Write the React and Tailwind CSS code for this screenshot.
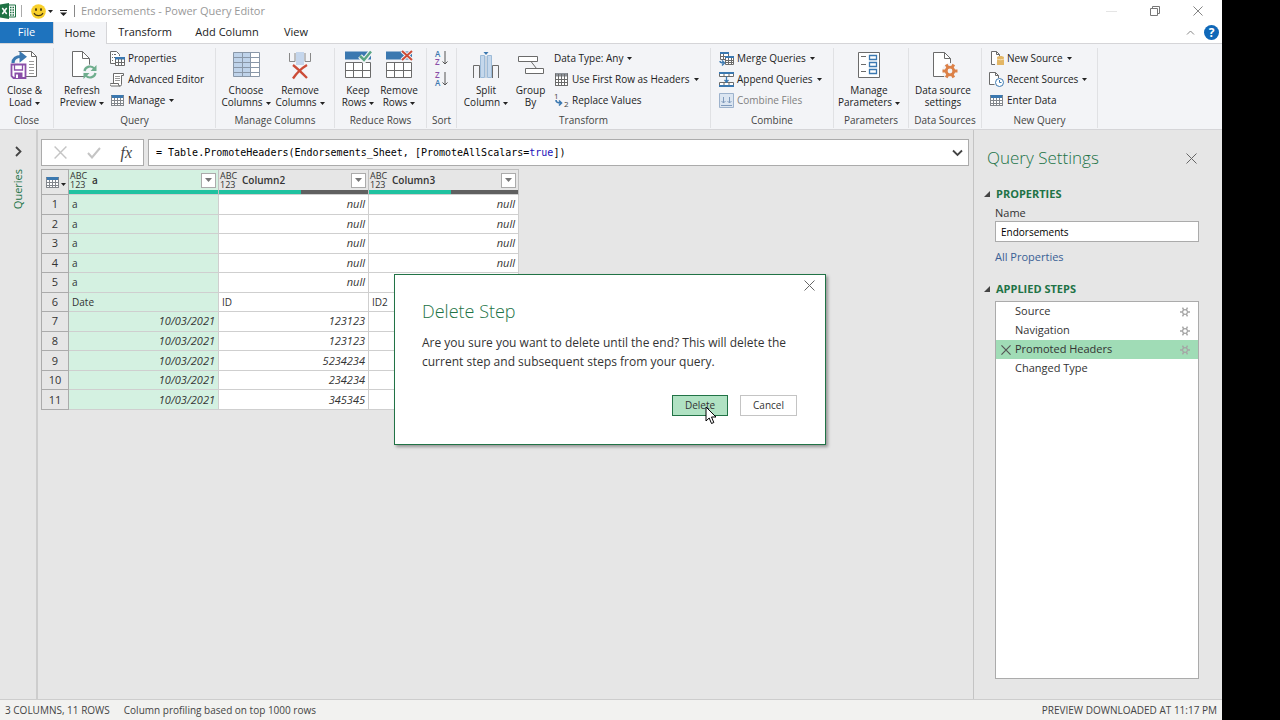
import React, { useState } from 'react';

const INK = '#6b6b6b';
const BLUE = '#3b78b0';

/* ---------- small glyphs ---------- */

function Caret({ className = 'ml-1' }) {
    return (
        <svg className={`inline-block shrink-0 align-middle ${className}`} width="5" height="3" viewBox="0 0 5 3" aria-hidden="true">
            <path d="M0 0h5L2.5 3z" fill="#222" />
        </svg>
    );
}

function Cross({ size = 11, color = '#666', width = 1 }) {
    return (
        <svg width={size} height={size} viewBox="0 0 11 11" fill="none" stroke={color} strokeWidth={width} aria-hidden="true">
            <path d="M.5.5l10 10M10.5.5l-10 10" />
        </svg>
    );
}

function Chevron({ d, color = '#444', width = 1.8 }) {
    return (
        <svg width="11" height="11" viewBox="0 0 11 11" fill="none" stroke={color} strokeWidth={width} aria-hidden="true">
            <path d={d} />
        </svg>
    );
}

function Gear({ color = '#a5a5a5' }) {
    return (
        <svg width="12" height="12" viewBox="0 0 12 12" fill="none" stroke={color} aria-hidden="true">
            <circle cx="6" cy="6" r="2.4" strokeWidth="1.2" />
            <path d="M8.5 6H11M3.5 6H1M7.3 8.2l1.2 2.1M4.7 3.8L3.5 1.7M4.7 8.2l-1.2 2.1M7.3 3.8l1.2-2.1" strokeWidth="1.4" />
        </svg>
    );
}

/* ---------- large ribbon icons ---------- */

function Big({ children }) {
    return (
        <svg width="30" height="30" viewBox="0 0 30 30" fill="none" stroke={INK} aria-hidden="true">
            {children}
        </svg>
    );
}

function CloseLoadIcon() {
    return (
        <Big>
            <path d="M9.5 1.5h13l5 5v20h-19" fill="#fff" />
            <path d="M22.5 1.5v5h5" />
            <path d="M20 11.5h5M20 14.5h5M20 17.5h5M20 20.5h5M20 23.5h5" stroke="#999" />
            <path d="M4 13c0-4 3-6.5 8-6.5" stroke={BLUE} strokeWidth="3.2" />
            <path d="M10.5 1l7.5 5.700-7.5 6z" fill={BLUE} stroke="none" />
            <path d="M2.500 14.500h14v13.500h-12l-2-2z" fill="#fff" stroke="#8a4fa8" strokeWidth="1.8" />
            <path d="M5.500 15v5h8v-5" stroke="#8a4fa8" strokeWidth="1.3" />
            <path d="M5.500 22.500h8V28h-8z" fill="#8a4fa8" stroke="none" />
            <path d="M7 24.500h2V28H7z" fill="#fff" stroke="none" />
        </Big>
    );
}

function RefreshIcon() {
    return (
        <Big>
            <path d="M5.5 1.500h10l7 7v18h-17z" fill="#fff" />
            <path d="M15.5 1.500v7h7" />
            <circle cx="23" cy="22" r="7.500" fill="#f3f4f7" stroke="none" />
            <path d="M17.500 21a5.500 5.500 0 0 1 10-2M28.500 23a5.500 5.500 0 0 1-10 2" stroke="#6fae8e" strokeWidth="2.2" />
            <path d="M29.500 15v6h-6zM16.500 29v-6h6z" fill="#6fae8e" stroke="none" />
        </Big>
    );
}

function ChooseColumnsIcon() {
    return (
        <Big>
            <path d="M2 2.500h17v24H2z" fill="#bfd3ea" stroke="none" />
            <path d="M20 2.500h8v24h-8z" fill="#fff" stroke="none" />
            <path d="M2.500 2.500h26v24h-26zM2.500 7.500h26M2.500 12.500h26M2.500 17.500h26M2.500 22.500h26M11.500 2.500v24M19.500 2.500v24" stroke="#8997a8" />
        </Big>
    );
}

function RemoveColumnsIcon() {
    return (
        <Big>
            <path d="M11 2h8v13h-8z" fill="#c5d6ec" stroke="none" />
            <path d="M4.500 3v8.500h5.500V3M25.500 3v8.500H20V3" stroke="#888" />
            <path d="M8 15c4 3 9 8 14 13M22 15C17 18 11 24 8 28.500" stroke="#cc4c38" strokeWidth="2.300" />
        </Big>
    );
}

function RowsIcon({ remove }) {
    return (
        <Big>
            <path d="M2 1.500h26v8H2z" fill={BLUE} stroke="none" />
            <path d="M2.500 12.500h25v15h-25zM2.500 20.500h25M10.500 12.500v15M19.500 12.500v15" fill="#fff" />
            {remove ? (
                <>
                    <path d="M18 1l10 9M28 1l-10 9" stroke="#f3f4f7" strokeWidth="4" />
                    <path d="M18 1l10 9M28 1l-10 9" stroke="#cc4c38" strokeWidth="2" />
                </>
            ) : (
                <>
                    <path d="M17 6l4 4.500L28 1.500" stroke="#f3f4f7" strokeWidth="5" />
                    <path d="M17 6l4 4L28 1.500" stroke="#5aa583" strokeWidth="2.500" />
                </>
            )}
        </Big>
    );
}

function SplitIcon() {
    return (
        <Big>
            <path d="M2.500 28V15.500h6V28M27.500 28V15.500h-6V28" />
            <path d="M9.500 5.500h4v22h-4zM16.500 5.500h4v22h-4z" fill="#c5d8ec" stroke="#9dbbd8" />
            <path d="M12.500 2h5L15 5z" fill={BLUE} stroke="none" />
            <path d="M15 6v22" stroke="#9db4cb" />
        </Big>
    );
}

function GroupByIcon() {
    return (
        <Big>
            <path d="M2.500 6.500h19v5h-19zM9.500 18.500h18v5h-18z" fill="#fff" />
            <path d="M15 11.500l5.500 7" />
        </Big>
    );
}

function ParametersIcon() {
    return (
        <Big>
            <path d="M4.500 2.500h21v25h-21z" fill="#fff" />
            <path d="M7 6.500h5M7 14.500h5M7 21.500h5" />
            <path d="M15.500 5.500h7v4h-7zM15.500 12.500h7v4h-7zM15.500 19.500h7v4h-7z" stroke={BLUE} strokeWidth="1.300" />
        </Big>
    );
}

function DataSourceIcon() {
    return (
        <Big>
            <path d="M5.500 2.500h11l6 6v18h-17z" fill="#fff" />
            <path d="M16.500 2.500v6h6" />
            <circle cx="22" cy="21" r="8" fill="#f3f4f7" stroke="none" />
            <circle cx="22" cy="21" r="3.800" stroke="#dc8148" strokeWidth="2.800" />
            <path d="M26 21h3.500M18 21h-3.500M24 24.500l1.800 3M20 17.500l-1.800-3M20 24.500l-1.800 3M24 17.500l1.800-3" stroke="#dc8148" strokeWidth="3" />
        </Big>
    );
}

/* ---------- 15px ribbon icons ---------- */

function Small({ children }) {
    return (
        <svg className="shrink-0" width="15" height="15" viewBox="0 0 15 15" fill="none" stroke={INK} aria-hidden="true">
            {children}
        </svg>
    );
}

function GridIcon() {
    return (
        <Small>
            <path d="M1.500 2.500h12v10h-12z" fill="#fff" />
            <path d="M1 2h13v3H1z" fill={BLUE} stroke="none" />
            <path d="M1.500 2.500v10h12v-10M1.500 7.500h12M1.500 10.500h12M4.500 5v7.500M7.500 5v7.500M10.500 5v7.500" stroke="#82868c" />
        </Small>
    );
}

function PropertiesIcon() {
    return (
        <Small>
            <path d="M5 12.500H.5v-12h6l3 3V5" fill="#fff" />
            <path d="M2 3.500h1M2 6.500h1M2 9.500h1M4 3.500h2M4 6.500h2" />
            <path d="M5.500 6.500h9v8h-9z" fill="#fff" />
            <path d="M5 6h10v2.500H5z" fill={BLUE} stroke="none" />
            <path d="M5.500 11.500h9M8.500 8v6.500M11.500 8v6.500" />
        </Small>
    );
}

function EditorIcon() {
    return (
        <Small>
            <path d="M3.500 11V1.500h10v2h-2v9a1.500 1.500 0 0 1-1.500 1.500H2a1.500 1.500 0 0 1-1.500-2.500h8v1.500a1.500 1.500 0 0 0 1.500 1" fill="#fff" />
            <path d="M5 4.500h5M5 6.500h5M5 8.500h5" stroke="#999" />
        </Small>
    );
}

function HeaderRowIcon() {
    return (
        <Small>
            <path d="M1.500 1.500h12v12h-12z" fill="#fff" />
            <path d="M1 1h13v3.500H1z" fill="#8d9299" stroke="none" />
            <path d="M1.500 1.500v12h12v-12M1.500 7.500h12M1.500 10.500h12M4.500 2v11.500M7.500 2v11.500M10.500 2v11.500" />
        </Small>
    );
}

function ReplaceIcon() {
    return (
        <svg className="shrink-0 overflow-visible" width="15" height="16" viewBox="0 0 15 16" aria-hidden="true">
            <text x="0" y="7" fontSize="8" fill="#444" fontFamily="Open Sans">1</text>
            <text x="10" y="15" fontSize="8" fill="#444" fontFamily="Open Sans">2</text>
            <path d="M2 8c0 2 1 3 4.500 3M5 8.500L7.500 11 5 13.500" fill="none" stroke={BLUE} strokeWidth="1.600" />
        </svg>
    );
}

function MergeIcon() {
    return (
        <Small>
            <path d="M1.500 1.500h8v7h-8z" fill="#fff" />
            <path d="M1 1h9v2H1z" fill={BLUE} stroke="none" />
            <path d="M1.500 5.500h8M4.500 3v5.500" />
            <path d="M6.500 5.500h8v8h-8z" fill="#fff" />
            <path d="M6 5h9v2H6z" fill={BLUE} stroke="none" />
            <path d="M6.500 9.500h8M6.500 11.500h8M9.500 7v6.500M12.500 7v6.500" />
            <path d="M1 10c0 1.500 1 2 3.500 2M3 9.500L5.500 12 3 14.500" stroke={BLUE} strokeWidth="1.400" />
        </Small>
    );
}

function AppendIcon() {
    return (
        <Small>
            <path d="M.5 1v3.500h14V1M5 .5v4M10 .5v4M.5 14.500v-4h14v4M5 10.500v4M10 10.500v4" fill="#fff" />
            <path d="M0 0h15v2H0zM0 13h15v2H0z" fill={BLUE} stroke="none" />
            <path d="M7.500 4.500V11M5.500 8l2 2 2-2" stroke={BLUE} strokeWidth="1.300" />
        </Small>
    );
}

function CombineFilesIcon() {
    return (
        <Small>
            <path d="M.5.500h14v14H.5z" fill="#dbe5f1" stroke="#9db2cc" />
            <path d="M4.500 4v6M2.500 8l2 2 2-2M10.500 4v6M8.500 8l2 2 2-2M2 12.500h11" stroke="#7f9abc" />
        </Small>
    );
}

function NewSourceIcon() {
    return (
        <Small>
            <path d="M6 13.500H2.500v-13h5l3 3V6" fill="#fff" />
            <path d="M7.500.5v3h3" />
            <path d="M8 6.500c0-2 7-2 7 0V14H8z" fill="#e3b665" stroke="none" />
            <path d="M8 8c2 1 5 1 7 0" stroke="#f7e2b8" />
        </Small>
    );
}

function RecentIcon() {
    return (
        <Small>
            <path d="M5.500 12.500H.5v-12h6l3 3V6" fill="#fff" />
            <path d="M6.500.5v3h3" />
            <circle cx="10.500" cy="10.500" r="4" fill="#fff" stroke={BLUE} />
            <path d="M10.500 8v2.500h2" stroke={BLUE} />
        </Small>
    );
}

function SortIcon({ top, bottom, topColor, bottomColor }) {
    return (
        <svg className="overflow-visible" width="14" height="17" viewBox="0 0 14 17" aria-hidden="true">
            <text x="0" y="7" fontSize="8" fill={topColor} fontFamily="Open Sans" fontWeight="600">{top}</text>
            <text x="0" y="15" fontSize="8" fill={bottomColor} fontFamily="Open Sans" fontWeight="600">{bottom}</text>
            <path d="M10 1v13M7.500 11.500L10 14l2.500-2.500" fill="none" stroke="#555" />
        </svg>
    );
}

/* ---------- ribbon parts ---------- */

function BigButton({ icon, lines, menu, className = '' }) {
    return (
        <button className={`flex flex-col items-center whitespace-nowrap pt-0.5 hover:bg-[#e3e8ef] ${className}`}>
            {icon}
            <span className="mt-1 leading-3">{lines[0]}</span>
            <span className="leading-3">
                {lines[1]}
                {menu && <Caret className="ml-[3px]" />}
            </span>
        </button>
    );
}

function SmallButton({ icon, label, menu, disabled }) {
    return (
        <button disabled={disabled} className="flex h-5 items-center whitespace-nowrap hover:bg-[#e3e8ef] disabled:text-[#808080]">
            {icon && <span className="mr-[3px] flex w-[15px] justify-center">{icon}</span>}
            {label}
            {menu && <Caret />}
        </button>
    );
}

function Group({ title, className = '', children }) {
    return (
        <section aria-label={title} className={`flex shrink-0 flex-col border-r border-[#e0e1e4] ${className}`}>
            <div className="flex flex-1 items-start justify-center">{children}</div>
            <div className="h-4 text-center leading-4 text-[#444]">{title}</div>
        </section>
    );
}

function Stack({ className = '', children }) {
    return <div className={`flex flex-1 flex-col items-start gap-px ${className}`}>{children}</div>;
}

function Ribbon() {
    return (
        <div className="flex h-[87px] shrink-0 overflow-hidden border-y border-[#d5d5d8] bg-[#f3f4f7] pb-px pt-1 text-[10px] text-[#222]">
            <Group title="Close" className="w-[54px]">
                <BigButton className="mr-1" icon={<CloseLoadIcon />} lines={['Close &', 'Load']} menu />
            </Group>
            <Group title="Query" className="w-[162px]">
                <BigButton className="w-14" icon={<RefreshIcon />} lines={['Refresh', 'Preview']} menu />
                <Stack>
                    <SmallButton icon={<PropertiesIcon />} label="Properties" />
                    <SmallButton icon={<EditorIcon />} label="Advanced Editor" />
                    <SmallButton icon={<GridIcon />} label="Manage" menu />
                </Stack>
            </Group>
            <Group title="Manage Columns" className="w-[119px]">
                <BigButton className="w-[54px]" icon={<ChooseColumnsIcon />} lines={['Choose', 'Columns']} menu />
                <BigButton className="mr-1 w-[54px]" icon={<RemoveColumnsIcon />} lines={['Remove', 'Columns']} menu />
            </Group>
            <Group title="Reduce Rows" className="w-[92px]">
                <BigButton className="w-[41px]" icon={<RowsIcon />} lines={['Keep', 'Rows']} menu />
                <BigButton className="mr-1 w-[41px]" icon={<RowsIcon remove />} lines={['Remove', 'Rows']} menu />
            </Group>
            <Group title="Sort" className="w-[30px]">
                <div className="flex flex-col gap-1 pt-0.5">
                    <button aria-label="Sort ascending"><SortIcon top="A" bottom="Z" topColor={BLUE} bottomColor="#8a4fa8" /></button>
                    <button aria-label="Sort descending"><SortIcon top="Z" bottom="A" topColor="#8a4fa8" bottomColor={BLUE} /></button>
                </div>
            </Group>
            <Group title="Transform" className="w-[254px]">
                <BigButton className="ml-1 w-[50px]" icon={<SplitIcon />} lines={['Split', 'Column']} menu />
                <BigButton className="mr-1 w-[39px]" icon={<GroupByIcon />} lines={['Group', 'By']} />
                <Stack>
                    <SmallButton label="Data Type: Any" menu />
                    <SmallButton icon={<HeaderRowIcon />} label="Use First Row as Headers" menu />
                    <SmallButton icon={<ReplaceIcon />} label="Replace Values" />
                </Stack>
            </Group>
            <Group title="Combine" className="w-[123px]">
                <Stack className="pl-2">
                    <SmallButton icon={<MergeIcon />} label="Merge Queries" menu />
                    <SmallButton icon={<AppendIcon />} label="Append Queries" menu />
                    <SmallButton icon={<CombineFilesIcon />} label="Combine Files" disabled />
                </Stack>
            </Group>
            <Group title="Parameters" className="w-[75px]">
                <BigButton className="mr-1" icon={<ParametersIcon />} lines={['Manage', 'Parameters']} menu />
            </Group>
            <Group title="Data Sources" className="w-[73px]">
                <BigButton className="mr-1" icon={<DataSourceIcon />} lines={['Data source', 'settings']} />
            </Group>
            <Group title="New Query" className="w-[116px]">
                <Stack className="pl-[7px]">
                    <SmallButton icon={<NewSourceIcon />} label="New Source" menu />
                    <SmallButton icon={<RecentIcon />} label="Recent Sources" menu />
                    <SmallButton icon={<GridIcon />} label="Enter Data" />
                </Stack>
            </Group>
        </div>
    );
}

function TitleBar() {
    return (
        <header className="flex h-[22px] shrink-0 items-center bg-white text-[11px]">
            <svg width="16" height="16" viewBox="0 0 16 16" aria-hidden="true">
                <path d="M8 2h7.500v12H8z" fill="#fff" stroke="#1f7244" />
                <path d="M10 4.500h1.500M12.500 4.500H14M10 7h1.500M12.500 7H14M10 9.500h1.500M12.500 9.500H14M10 12h1.500M12.500 12H14" stroke="#1f7244" strokeWidth="1.300" />
                <path d="M0 1.500L9 0v16l-9-1.500z" fill="#1f7244" />
                <path d="M2.300 5l4.400 6M6.700 5l-4.400 6" stroke="#fff" strokeWidth="1.500" />
            </svg>
            <span className="ml-[5px] h-3 w-px bg-[#aaa]" />
            <button aria-label="Send feedback" className="ml-[9px] flex items-center">
                <svg width="15" height="15" viewBox="0 0 15 15" aria-hidden="true">
                    <circle cx="7.500" cy="7.500" r="7.300" fill="#f8d02c" />
                    <ellipse cx="5" cy="5.500" rx="1" ry="1.500" fill="#4a3b12" />
                    <ellipse cx="10" cy="5.500" rx="1" ry="1.500" fill="#4a3b12" />
                    <path d="M3 9c1.500 3.500 7.500 3.500 9 0" fill="none" stroke="#4a3b12" strokeWidth="1.100" />
                </svg>
                <Caret className="ml-[2px]" />
            </button>
            <button aria-label="Customize toolbar" className="ml-[7px] mt-1">
                <svg width="7" height="6" viewBox="0 0 7 6" aria-hidden="true">
                    <path d="M0 0h7v1H0zM0 2.500h7L3.500 6z" fill="#222" />
                </svg>
            </button>
            <span className="ml-[7px] h-3 w-px bg-[#888]" />
            <h1 className="ml-[6px] text-[#999]">Endorsements - Power Query Editor</h1>
            <div className="ml-auto flex items-center gap-[33px] pr-[19px]">
                <button aria-label="Minimize" className="h-px w-[11px] bg-[#e5e5e5]" />
                <button aria-label="Restore">
                    <svg width="10" height="10" viewBox="0 0 10 10" fill="none" stroke="#777" aria-hidden="true">
                        <path d="M.5 2.500h7v7h-7zM2.500 2.500v-2h7v7h-2" />
                    </svg>
                </button>
                <button aria-label="Close window"><Cross size={10} color="#777" /></button>
            </div>
        </header>
    );
}

function TabBar() {
    const [tab, setTab] = useState('Home');
    const tabs = [
        ['Home', 'w-[54px]'],
        ['Transform', 'w-[76px]'],
        ['Add Column', 'w-[88px]'],
        ['View', 'w-[50px]']
    ];
    return (
        <nav className="flex h-[21px] shrink-0 items-stretch bg-white text-[11px] text-[#222]">
            <button className="w-[53px] bg-[#1e73be] text-white">File</button>
            {tabs.map(([name, width]) => (
                <button
                    key={name}
                    onClick={() => setTab(name)}
                    className={`${width} ${tab === name ? 'z-10 -mb-px border-x border-[#d5d5d8] bg-[#f3f4f7]' : ''}`}
                >
                    {name}
                </button>
            ))}
            <div className="ml-auto flex items-center gap-2 pr-[3px]">
                <button aria-label="Collapse ribbon">
                    <Chevron d="M2 7.500L5.500 4 9 7.500" color="#888" width={1} />
                </button>
                <button aria-label="Help" className="h-[15px] w-[15px] rounded-full bg-[#1068b8] text-[12px] font-bold leading-[15px] text-white">
                    ?
                </button>
            </div>
        </nav>
    );
}

/* ---------- formula bar and preview ---------- */

function FormulaBar() {
    return (
        <div className="flex h-[27px] shrink-0 gap-1">
            <div className="flex w-[103px] items-center justify-around border border-[#ababab] bg-white pl-0.5 pr-px">
                <button aria-label="Cancel formula"><Cross size={13} color="#c4c4c4" width={1.2} /></button>
                <button aria-label="Apply formula">
                    <svg width="14" height="12" viewBox="0 0 14 12" fill="none" aria-hidden="true">
                        <path d="M1 6l4 4.500L13 1" stroke="#c4c4c4" strokeWidth="2" />
                    </svg>
                </button>
                <button aria-label="Add step" className="font-['Liberation_Serif',serif] text-[16px] italic leading-5 text-[#444]">fx</button>
            </div>
            <div className="flex min-w-0 flex-1 items-center justify-between border border-[#ababab] bg-white pl-[7px] pr-[5px]">
                <code className="truncate font-['DejaVu_Sans_Mono',monospace] text-[10px] text-black">
                    = Table.PromoteHeaders(Endorsements_Sheet, [PromoteAllScalars=<span className="text-[#1c10b8]">true</span>])
                </code>
                <button aria-label="Expand formula bar"><Chevron d="M1 3.500L5.500 8 10 3.500" /></button>
            </div>
        </div>
    );
}

const COLUMNS = [
    { name: 'a', valid: 100, selected: true },
    { name: 'Column2', valid: 55 },
    { name: 'Column3', valid: 55 }
];

const ROWS = [
    ['a', null, null],
    ['a', null, null],
    ['a', null, null],
    ['a', null, null],
    ['a', null, null],
    ['Date', 'ID', 'ID2'],
    ['10/03/2021', 123123, ''],
    ['10/03/2021', 123123, ''],
    ['10/03/2021', 5234234, ''],
    ['10/03/2021', 234234, ''],
    ['10/03/2021', 345345, '']
];

function isText(value) {
    return typeof value === 'string' && !value.includes('/');
}

function PreviewTable() {
    return (
        <table className="mt-[3px] h-[241px] w-[478px] table-fixed border-collapse text-[11px] leading-4 text-[#333]">
            <thead>
                <tr className="h-6">
                    <th className="w-[27px] border border-[#ababab] bg-[#e6e6e6] p-0">
                        <button aria-label="Table options" className="flex w-full items-center justify-center">
                            <GridIcon />
                            <Caret className="ml-px mt-1" />
                        </button>
                    </th>
                    {COLUMNS.map(col => (
                        <th
                            key={col.name}
                            className={`border-x border-t border-[#c0c0c0] p-0 text-left align-top ${col.selected ? 'bg-[#d4f1e1]' : 'bg-[#e6e6e6]'}`}
                        >
                            <div className="flex h-5 items-center pl-px pr-[2px]">
                                <span className="w-[22px] text-[9px] font-normal leading-[9px] text-[#333]">ABC<br />123</span>
                                <span className="flex-1 text-[10px] font-semibold">{col.name}</span>
                                <button aria-label={`Filter ${col.name}`} className="flex h-[15px] w-[15px] items-center justify-center border border-[#ababab] bg-white">
                                    <svg width="7" height="4" viewBox="0 0 7 4" aria-hidden="true"><path d="M0 0h7L3.500 4z" fill="#777" /></svg>
                                </button>
                            </div>
                            <div className="h-1 bg-[#606060]">
                                <div className="h-1 bg-[#1fc2a0]" style={{ width: `${col.valid}%` }} />
                            </div>
                        </th>
                    ))}
                </tr>
            </thead>
            <tbody>
                {ROWS.map((row, i) => (
                    <tr key={i}>
                        <th scope="row" className="border border-[#ababab] bg-[#e6e6e6] p-0 font-normal">{i + 1}</th>
                        {row.map((value, j) => (
                            <td
                                key={j}
                                className={`border border-[#cfcfcf] px-[3px] py-0 ${j === 0 ? 'bg-[#d4f1e1]' : 'bg-white'} ${isText(value) ? 'text-[10px]' : 'text-right italic'}`}
                            >
                                {value === null ? 'null' : value}
                            </td>
                        ))}
                    </tr>
                ))}
            </tbody>
        </table>
    );
}

/* ---------- side panes ---------- */

function QueriesPane() {
    return (
        <aside className="flex w-[38px] shrink-0 flex-col items-center border-r-2 border-[#cdcdcd] pt-4">
            <button aria-label="Expand queries pane"><Chevron d="M3 1l4.500 4.500L3 10" /></button>
            <span className="mt-3 rotate-180 text-[11px] text-[#217346] [writing-mode:vertical-rl]">Queries</span>
        </aside>
    );
}

function SectionTitle({ children }) {
    return (
        <h3 className="flex items-center text-[11px] font-bold leading-4 text-[#217346]">
            <svg className="mr-[6px]" width="6" height="6" viewBox="0 0 6 6" aria-hidden="true"><path d="M6 0v6H0z" fill="#444" /></svg>
            {children}
        </h3>
    );
}

const STEPS = [
    { name: 'Source', gear: true },
    { name: 'Navigation', gear: true },
    { name: 'Promoted Headers', gear: true },
    { name: 'Changed Type' }
];

function QuerySettings() {
    const [name, setName] = useState('Endorsements');
    const [active, setActive] = useState('Promoted Headers');
    return (
        <aside className="flex w-[249px] shrink-0 flex-col border-l border-[#c4c4c4] pb-5 pl-[10px] pr-[23px] text-[11px] text-[#333]">
            <div className="mt-4 flex items-center justify-between pl-[3px] pr-[2px]">
                <h2 className="text-[17px] font-light leading-6 text-[#217346]">Query Settings</h2>
                <button aria-label="Close pane"><Cross /></button>
            </div>
            <div className="mt-4">
                <SectionTitle>PROPERTIES</SectionTitle>
            </div>
            <div className="mt-[3px] flex flex-col items-start pl-[11px]">
                <label htmlFor="query-name" className="leading-4">Name</label>
                <input
                    id="query-name"
                    value={name}
                    onChange={e => setName(e.target.value)}
                    className="h-[21px] w-full border border-[#ababab] bg-white px-[5px] text-[10px] text-black outline-none"
                />
                <a href="#all" className="mt-[7px] leading-4 text-[#3a5f95]">All Properties</a>
            </div>
            <div className="mt-4">
                <SectionTitle>APPLIED STEPS</SectionTitle>
            </div>
            <ul className="ml-[11px] mt-1 flex-1 border border-[#ababab] bg-white">
                {STEPS.map(step => (
                    <li key={step.name} className={`flex h-[19px] items-center pl-1 pr-[7px] ${active === step.name ? 'bg-[#a0dcb6]' : ''}`}>
                        <span className="flex w-[15px] items-center pl-px">
                            {active === step.name && (
                                <button aria-label="Delete step"><Cross size={10} color="#555" width={1.3} /></button>
                            )}
                        </span>
                        <button onClick={() => setActive(step.name)} className="flex-1 text-left">{step.name}</button>
                        {step.gear && <button aria-label={`Edit ${step.name}`}><Gear /></button>}
                    </li>
                ))}
            </ul>
        </aside>
    );
}

/* ---------- dialog ---------- */

function DeleteDialog({ onClose }) {
    return (
        <div className="absolute inset-0 z-20 flex items-center justify-center pb-0.5 pr-0.5">
            <div
                role="dialog"
                aria-labelledby="delete-title"
                className="relative w-[432px] border border-[#217346] bg-white px-[27px] pb-7 pt-6 text-[#333] shadow-[2px_2px_3px_rgba(0,0,0,0.35)]"
            >
                <button aria-label="Close dialog" onClick={onClose} className="absolute right-[10px] top-[5px]"><Cross /></button>
                <h2 id="delete-title" className="text-[18px] font-light leading-6 text-[#217346]">Delete Step</h2>
                <p className="mt-[10px] text-[12px] leading-[19px]">
                    Are you sure you want to delete until the end? This will delete the current step and subsequent steps from your query.
                </p>
                <div className="mt-6 flex justify-end gap-3 pr-px text-[10px]">
                    <button onClick={onClose} className="relative h-[21px] w-14 border border-[#217346] bg-[#b0e2c3]">
                        Delete
                        <svg className="absolute left-8 top-[10px]" width="12" height="19" viewBox="0 0 12 19" aria-hidden="true">
                            <path d="M1 1v14l3.200-3 2.300 5.500 2.300-1L6.500 11H11z" fill="#fff" stroke="#000" />
                        </svg>
                    </button>
                    <button onClick={onClose} className="h-[21px] w-[57px] border border-[#c4c4c4] bg-white">Cancel</button>
                </div>
            </div>
        </div>
    );
}

export default function App() {
    const [open, setOpen] = useState(true);
    return (
        <div className="flex h-screen bg-black font-['Open_Sans','Noto_Sans',sans-serif]">
            <div className="relative mr-[58px] flex min-w-0 flex-1 flex-col bg-[#e6e6e6]">
                <TitleBar />
                <TabBar />
                <Ribbon />
                <div className="flex min-h-0 flex-1">
                    <QueriesPane />
                    <main className="flex min-w-0 flex-1 flex-col pl-[3px] pr-1 pt-[9px]">
                        <FormulaBar />
                        <PreviewTable />
                    </main>
                    <QuerySettings />
                </div>
                <footer className="flex h-[21px] shrink-0 items-center border-t border-[#cdcdcd] bg-[#f2f2f0] px-[5px] text-[10px] text-[#444]">
                    <span>3 COLUMNS, 11 ROWS</span>
                    <span className="ml-[14px]">Column profiling based on top 1000 rows</span>
                    <span className="ml-auto">PREVIEW DOWNLOADED AT 11:17 PM</span>
                </footer>
                {open && <DeleteDialog onClose={() => setOpen(false)} />}
            </div>
        </div>
    );
}
